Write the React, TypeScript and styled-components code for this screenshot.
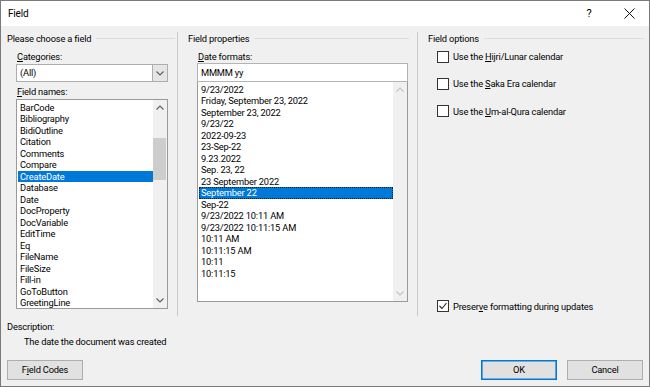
import React from "react";
import styled, { createGlobalStyle } from "styled-components";

const FONT = `Roboto, "Noto Sans", Arial, sans-serif`;

const Global = createGlobalStyle`
  html, body { margin: 0; padding: 0; background: #f0f0f0; }
  body { font-family: ${FONT}; font-size: 9.3px; color: #000; }
  * { box-sizing: border-box; }
`;

const Window = styled.div`
  width: 650px;
  height: 387px;
  border: 1px solid #7a7a7a;
  background: #f0f0f0;
  display: flex;
  flex-direction: column;
  font-family: ${FONT};
  font-size: 9.3px;
  letter-spacing: -0.18px;
  overflow: hidden;
`;

const TitleBar = styled.div`
  height: 25px;
  background: #ffffff;
  display: flex;
  align-items: center;
  padding-left: 7px;
  flex: none;
`;

const Title = styled.div`
  flex: 1;
  font-size: 10px;
`;

const TitleButton = styled.div`
  width: 40px;
  height: 25px;
  display: flex;
  align-items: center;
  justify-content: center;
  font-size: 11px;
  color: #000;
`;

const Body = styled.div`
  flex: 1;
  display: flex;
  flex-direction: column;
`;

const Columns = styled.div`
  display: flex;
  margin-top: 6px;
  height: 284px;
`;

const Column = styled.div<{ $w?: number; $pl: number; $pr: number; $last?: boolean }>`
  width: ${(p) => (p.$w ? `${p.$w}px` : "auto")};
  flex: ${(p) => (p.$w ? "none" : "1")};
  border-right: ${(p) => (p.$last ? "none" : "1px solid #c9c9c9")};
  padding-left: ${(p) => p.$pl}px;
  padding-right: ${(p) => p.$pr}px;
  display: flex;
  flex-direction: column;
`;

const GroupHeader = styled.div`
  display: flex;
  align-items: center;
  gap: 5px;
  height: 13px;
  line-height: 13px;
  white-space: nowrap;
  &::after {
    content: "";
    flex: 1;
    height: 1px;
    margin-top: -1px;
    background: #dcdcdc;
  }
`;

const Content = styled.div`
  margin-left: 9px;
  display: flex;
  flex-direction: column;
  flex: 1;
`;

const Label = styled.div<{ $mt: number; $mb: number }>`
  height: 13px;
  line-height: 13px;
  padding-left: 1px;
  margin-top: ${(p) => p.$mt}px;
  margin-bottom: ${(p) => p.$mb}px;
  white-space: nowrap;
`;

const Key = styled.span`
  text-decoration: underline;
  text-underline-offset: 1px;
  text-decoration-thickness: 1px;
`;

const Combo = styled.div`
  width: 152px;
  height: 18px;
  border: 1px solid #adadad;
  background: #fff;
  display: flex;
  align-items: stretch;
`;

const ComboText = styled.div`
  flex: 1;
  padding-left: 3px;
  line-height: 16px;
`;

const ComboButton = styled.div`
  width: 15px;
  background: #e5e5e5;
  border-left: 1px solid #adadad;
  display: flex;
  align-items: center;
  justify-content: center;
`;

const TextBox = styled.div`
  width: 211px;
  height: 19px;
  border: 1px solid #b4b4b4;
  background: #fff;
  padding-left: 3px;
  line-height: 17px;
  position: relative;
  z-index: 1;
`;

const ListBox = styled.div<{ $w: number; $h: number; $mt?: number }>`
  width: ${(p) => p.$w}px;
  height: ${(p) => p.$h}px;
  margin-top: ${(p) => p.$mt ?? 0}px;
  border: 1px solid #9a9a9a;
  background: #fff;
  display: flex;
`;

const Items = styled.div`
  flex: 1;
  overflow: hidden;
  padding-top: 2px;
`;

const Item = styled.div<{ $sel?: boolean; $focus?: boolean }>`
  height: 11.47px;
  line-height: 11.47px;
  margin-left: 1px;
  padding-left: 2px;
  white-space: nowrap;
  background: ${(p) => (p.$sel ? "#0078d7" : "transparent")};
  color: ${(p) => (p.$sel ? "#fff" : "#000")};
  outline: ${(p) => (p.$focus ? "1px dotted #1a1a1a" : "none")};
  outline-offset: -1px;
`;

const ScrollBar = styled.div`
  width: 14px;
  background: #f0f0f0;
  display: flex;
  flex-direction: column;
  flex: none;
`;

const ScrollArrow = styled.div`
  height: 15px;
  display: flex;
  align-items: center;
  justify-content: center;
  flex: none;
`;

const Track = styled.div`
  flex: 1;
`;

const Thumb = styled.div<{ $top: number; $h: number }>`
  margin-top: ${(p) => p.$top}px;
  height: ${(p) => p.$h}px;
  margin-right: 1px;
  background: #cdcdcd;
`;

const CheckRow = styled.div<{ $mt: number; $mb?: number }>`
  display: flex;
  align-items: center;
  gap: 4px;
  height: 13px;
  line-height: 13px;
  margin-top: ${(p) => p.$mt}px;
  margin-bottom: ${(p) => p.$mb ?? 0}px;
  white-space: nowrap;
`;

const Box = styled.div`
  width: 12px;
  height: 12px;
  border: 1px solid #333;
  background: #fff;
  flex: none;
  display: flex;
  align-items: center;
  justify-content: center;
`;

const Description = styled.div`
  padding-left: 6px;
  padding-top: 3.5px;
`;

const DescLine = styled.div<{ $indent?: number; $mt?: number }>`
  height: 13px;
  line-height: 13px;
  padding-left: ${(p) => p.$indent ?? 0}px;
  margin-top: ${(p) => p.$mt ?? 0}px;
`;

const Footer = styled.div`
  margin-top: auto;
  margin-bottom: 6.5px;
  padding: 0 6px;
  display: flex;
  gap: 10px;
`;

const Spacer = styled.div`
  flex: 1;
`;

const Button = styled.div<{ $default?: boolean }>`
  width: 76px;
  height: 20px;
  background: #e1e1e1;
  border: 1px solid ${(p) => (p.$default ? "#0078d7" : "#adadad")};
  box-shadow: ${(p) => (p.$default ? "inset 0 0 0 0.6px #0078d7" : "none")};
  display: flex;
  align-items: center;
  justify-content: center;
  line-height: 18px;
`;

const Chevron = ({ up, color }: { up?: boolean; color: string }) => (
  <svg width="8" height="5" viewBox="0 0 8 5">
    <polyline
      points={up ? "0.5,4.5 4,1 7.5,4.5" : "0.5,0.5 4,4 7.5,0.5"}
      fill="none"
      stroke={color}
      strokeWidth="1.2"
    />
  </svg>
);

const fieldNames = [
  "BarCode",
  "Bibliography",
  "BidiOutline",
  "Citation",
  "Comments",
  "Compare",
  "CreateDate",
  "Database",
  "Date",
  "DocProperty",
  "DocVariable",
  "EditTime",
  "Eq",
  "FileName",
  "FileSize",
  "Fill-in",
  "GoToButton",
  "GreetingLine",
];

const dateFormats = [
  "9/23/2022",
  "Friday, September 23, 2022",
  "September 23, 2022",
  "9/23/22",
  "2022-09-23",
  "23-Sep-22",
  "9.23.2022",
  "Sep. 23, 22",
  "23 September 2022",
  "September 22",
  "Sep-22",
  "9/23/2022 10:11 AM",
  "9/23/2022 10:11:15 AM",
  "10:11 AM",
  "10:11:15 AM",
  "10:11",
  "10:11:15",
];

export default function App() {
  return (
    <>
      <Global />
      <Window>
        <TitleBar>
          <Title>Field</Title>
          <TitleButton>?</TitleButton>
          <TitleButton>
            <svg width="11" height="11" viewBox="0 0 11 11">
              <path d="M0.5 0.5 L10.5 10.5 M10.5 0.5 L0.5 10.5" stroke="#111" strokeWidth="1" />
            </svg>
          </TitleButton>
        </TitleBar>
        <Body>
          <Columns>
            <Column $w={177} $pl={6} $pr={2}>
              <GroupHeader>Please choose a field</GroupHeader>
              <Content>
                <Label $mt={5} $mb={1}>
                  <Key>C</Key>ategories:
                </Label>
                <Combo>
                  <ComboText>(All)</ComboText>
                  <ComboButton>
                    <Chevron color="#606060" />
                  </ComboButton>
                </Combo>
                <Label $mt={2.5} $mb={1.5}>
                  <Key>F</Key>ield names:
                </Label>
                <ListBox $w={152} $h={210}>
                  <Items>
                    {fieldNames.map((n) => (
                      <Item key={n} $sel={n === "CreateDate"}>
                        {n}
                      </Item>
                    ))}
                  </Items>
                  <ScrollBar>
                    <ScrollArrow>
                      <Chevron up color="#606060" />
                    </ScrollArrow>
                    <Track>
                      <Thumb $top={23} $h={42} />
                    </Track>
                    <ScrollArrow>
                      <Chevron color="#606060" />
                    </ScrollArrow>
                  </ScrollBar>
                </ListBox>
              </Content>
            </Column>
            <Column $w={240} $pl={10} $pr={8}>
              <GroupHeader>Field properties</GroupHeader>
              <Content>
                <Label $mt={5} $mb={0}>
                  <Key>D</Key>ate formats:
                </Label>
                <TextBox>MMMM yy</TextBox>
                <ListBox $w={211} $h={221} $mt={-1}>
                  <Items>
                    {dateFormats.map((d) => (
                      <Item key={d} $sel={d === "September 22"} $focus={d === "September 22"}>
                        {d}
                      </Item>
                    ))}
                  </Items>
                  <ScrollBar>
                    <ScrollArrow>
                      <Chevron up color="#c6c6c6" />
                    </ScrollArrow>
                    <Track />
                    <ScrollArrow>
                      <Chevron color="#c6c6c6" />
                    </ScrollArrow>
                  </ScrollBar>
                </ListBox>
              </Content>
            </Column>
            <Column $pl={10} $pr={5} $last>
              <GroupHeader>Field options</GroupHeader>
              <Content>
                <CheckRow $mt={5}>
                  <Box />
                  <span>
                    Use the <Key>H</Key>ijri/Lunar calendar
                  </span>
                </CheckRow>
                <CheckRow $mt={14.3}>
                  <Box />
                  <span>
                    Use the <Key>S</Key>aka Era calendar
                  </span>
                </CheckRow>
                <CheckRow $mt={14.3}>
                  <Box />
                  <span>
                    Use the <Key>U</Key>m-al-Qura calendar
                  </span>
                </CheckRow>
                <Spacer />
                <CheckRow $mt={0} $mb={3.5}>
                  <Box>
                    <svg width="10" height="10" viewBox="0 0 10 10">
                      <polyline points="1.5,5 4,7.5 8.5,2" fill="none" stroke="#222" strokeWidth="1.1" />
                    </svg>
                  </Box>
                  <span>
                    Preser<Key>v</Key>e formatting during updates
                  </span>
                </CheckRow>
              </Content>
            </Column>
          </Columns>
          <Description>
            <DescLine>Description:</DescLine>
            <DescLine $indent={17} $mt={2.5}>
              The date the document was created
            </DescLine>
          </Description>
          <Footer>
            <Button>
              <span>
                F<Key>i</Key>eld Codes
              </span>
            </Button>
            <Spacer />
            <Button $default>OK</Button>
            <Button>Cancel</Button>
          </Footer>
        </Body>
      </Window>
    </>
  );
}
